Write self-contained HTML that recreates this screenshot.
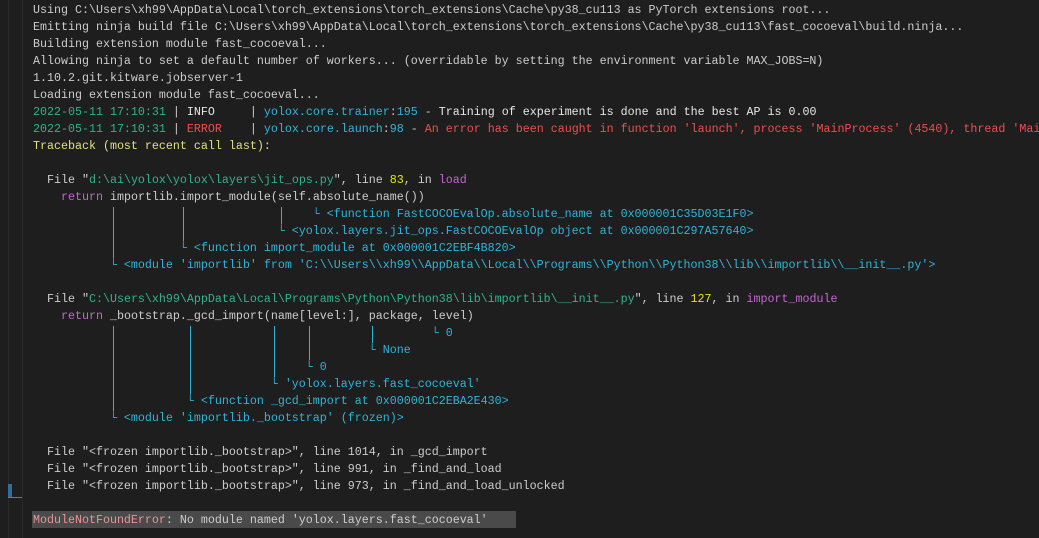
<!DOCTYPE html>
<html><head><meta charset="utf-8"><style>
html,body{margin:0;padding:0;background:#1e1e1e;width:1039px;height:538px;overflow:hidden}
#t{position:absolute;left:33px;top:2px;font-family:"Liberation Mono",monospace;font-size:11.67px;line-height:17px;color:#cccccc}
.r{height:17px;overflow:hidden;width:1010px;white-space:pre}
.g{color:#2fb38a}.c{color:#2fb4d8}.red{color:#f14c4c}.w{color:#e5e5e5}.y{color:#e0e07a}.p{color:#c465d0}.n{color:#e5e510}.f{color:#2fb38a}.pk{color:#e59595}
.v{position:absolute;width:1px;background:#2fb4d8}
.gl{position:absolute;top:0;width:1px;height:538px;background:#2a2a2a}
</style></head><body>
<div class="gl" style="left:8px"></div><div class="gl" style="left:22px"></div>
<div style="position:absolute;left:8px;top:484px;width:4px;height:13px;background:#2f6f9f"></div>
<div style="position:absolute;left:8px;top:497px;width:14px;height:1px;background:#777"></div>
<div style="position:absolute;left:32px;top:511px;width:484px;height:17px;background:#4a4a4a"></div>
<div id="t"><div class="r">Using C:\Users\xh99\AppData\Local\torch_extensions\torch_extensions\Cache\py38_cu113 as PyTorch extensions root...</div><div class="r">Emitting ninja build file C:\Users\xh99\AppData\Local\torch_extensions\torch_extensions\Cache\py38_cu113\fast_cocoeval\build.ninja...</div><div class="r">Building extension module fast_cocoeval...</div><div class="r">Allowing ninja to set a default number of workers... (overridable by setting the environment variable MAX_JOBS=N)</div><div class="r">1.10.2.git.kitware.jobserver-1</div><div class="r">Loading extension module fast_cocoeval...</div><div class="r"><span class="g">2022-05-11 17:10:31</span> | <span class="w">INFO</span>     | <span class="c">yolox.core.trainer</span>:<span class="c">195</span> - <span class="w">Training of experiment is done and the best AP is 0.00</span></div><div class="r"><span class="g">2022-05-11 17:10:31</span> | <span class="red">ERROR</span>    | <span class="c">yolox.core.launch</span>:<span class="c">98</span> - <span class="red">An error has been caught in function 'launch', process 'MainProcess' (4540), thread 'MainThread' (1234):</span></div><div class="r y">Traceback (most recent call last):</div><div class="r"> </div><div class="r">  File "<span class="f">d:\ai\yolox\yolox\layers\jit_ops.py</span>", line <span class="n">83</span>, in <span class="p">load</span></div><div class="r">    <span class="p">return</span> importlib.import_module(self.absolute_name())</div><div class="r c">                                        └ &lt;function FastCOCOEvalOp.absolute_name at 0x000001C35D03E1F0&gt;</div><div class="r c">                                   └ &lt;yolox.layers.jit_ops.FastCOCOEvalOp object at 0x000001C297A57640&gt;</div><div class="r c">                     └ &lt;function import_module at 0x000001C2EBF4B820&gt;</div><div class="r c">           └ &lt;module 'importlib' from 'C:\\Users\\xh99\\AppData\\Local\\Programs\\Python\\Python38\\lib\\importlib\\__init__.py'&gt;</div><div class="r"> </div><div class="r">  File "<span class="f">C:\Users\xh99\AppData\Local\Programs\Python\Python38\lib\importlib\__init__.py</span>", line <span class="n">127</span>, in <span class="p">import_module</span></div><div class="r">    <span class="p">return</span> _bootstrap._gcd_import(name[level:], package, level)</div><div class="r c">                                                         └ 0</div><div class="r c">                                                └ None</div><div class="r c">                                       └ 0</div><div class="r c">                                  └ 'yolox.layers.fast_cocoeval'</div><div class="r c">                      └ &lt;function _gcd_import at 0x000001C2EBA2E430&gt;</div><div class="r c">           └ &lt;module 'importlib._bootstrap' (frozen)&gt;</div><div class="r"> </div><div class="r">  File "&lt;frozen importlib._bootstrap&gt;", line 1014, in _gcd_import</div><div class="r">  File "&lt;frozen importlib._bootstrap&gt;", line 991, in _find_and_load</div><div class="r">  File "&lt;frozen importlib._bootstrap&gt;", line 973, in _find_and_load_unlocked</div><div class="r"> </div><div class="r"><span class="pk">ModuleNotFoundError</span>: No module named 'yolox.layers.fast_cocoeval'</div></div>
<div class="v" style="left:113px;top:207px;height:51px"></div>
<div class="v" style="left:183px;top:207px;height:34px"></div>
<div class="v" style="left:281px;top:207px;height:17px"></div>
<div class="v" style="left:113px;top:326px;height:85px"></div>
<div class="v" style="left:190px;top:326px;height:68px"></div>
<div class="v" style="left:274px;top:326px;height:51px"></div>
<div class="v" style="left:309px;top:326px;height:34px"></div>
<div class="v" style="left:372px;top:326px;height:17px"></div>
</body></html>
